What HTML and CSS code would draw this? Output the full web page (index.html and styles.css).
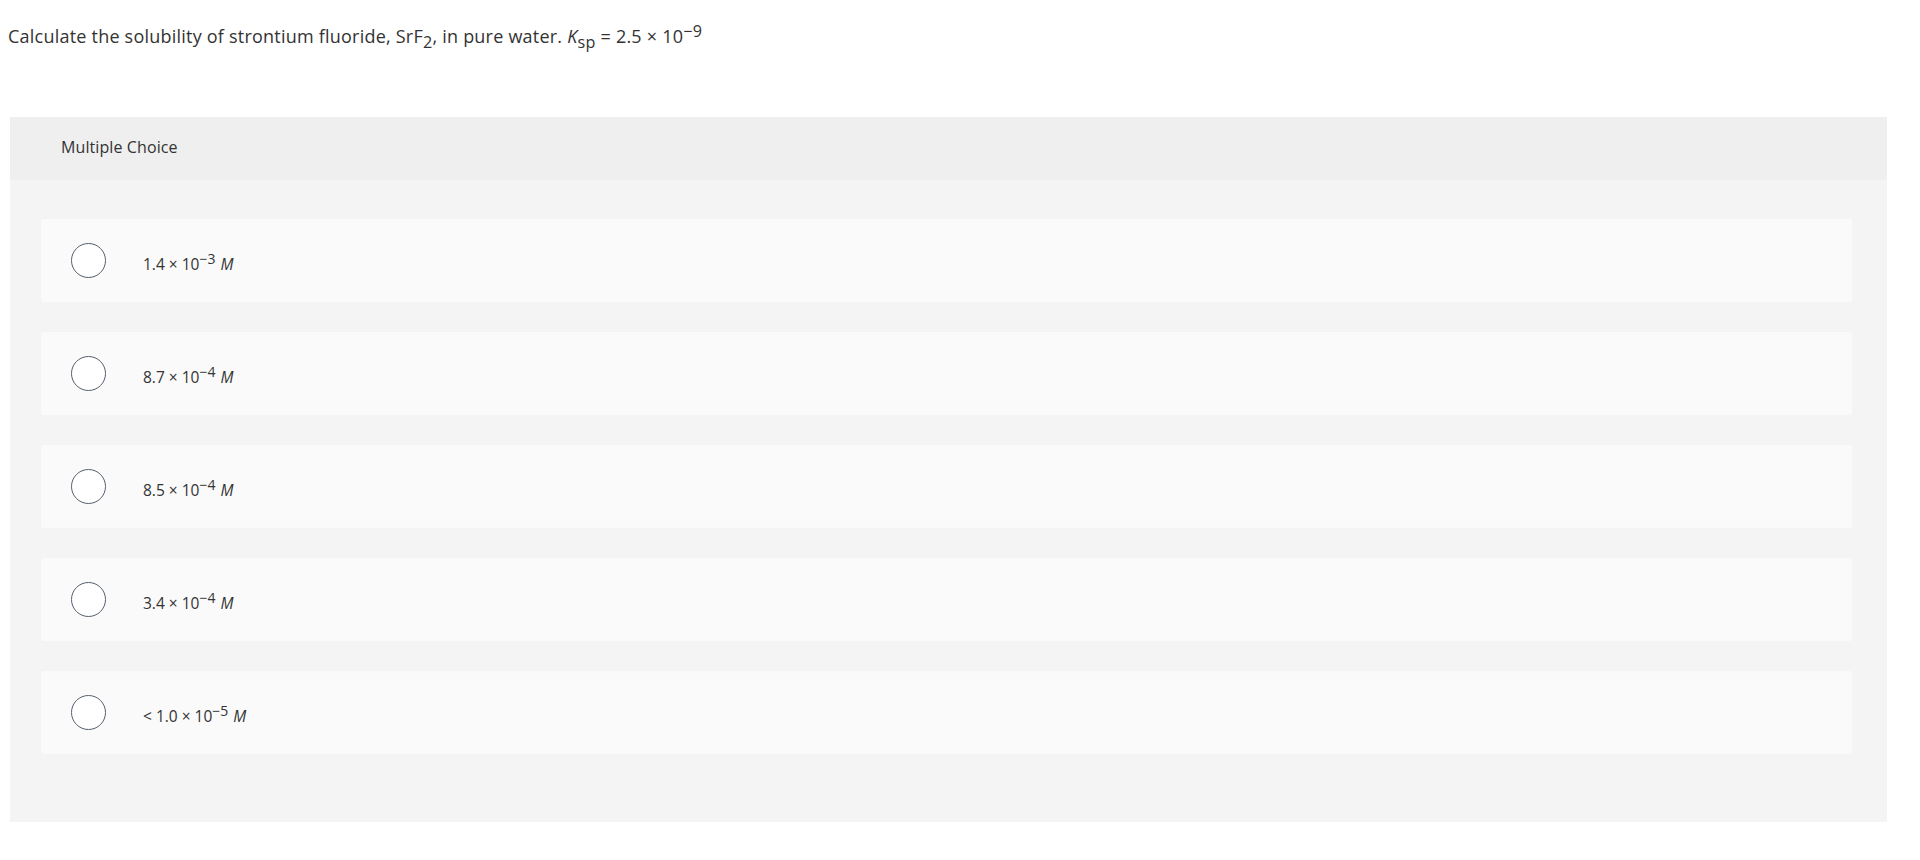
FILE: index.html
```html
<!DOCTYPE html>
<html lang="en">
<head>
<meta charset="utf-8">
<title>Multiple Choice</title>
<link rel="stylesheet" href="styles.css">
</head>
<body>
<div class="page">
  <p class="prompt">Calculate the solubility of strontium fluoride, SrF<sub class="sub">2</sub>, in pure water. <i>K</i><sub class="sub">sp</sub> = 2.5 × 10<sup class="sup">−9</sup></p>
  <section class="panel">
    <header class="panel-head">Multiple Choice</header>
    <div class="choices">
      <label class="choice"><span class="radio"></span><span class="answer">1.4 × 10<sup class="sup">−3</sup> <i>M</i></span></label>
      <label class="choice"><span class="radio"></span><span class="answer">8.7 × 10<sup class="sup">−4</sup> <i>M</i></span></label>
      <label class="choice"><span class="radio"></span><span class="answer">8.5 × 10<sup class="sup">−4</sup> <i>M</i></span></label>
      <label class="choice"><span class="radio"></span><span class="answer">3.4 × 10<sup class="sup">−4</sup> <i>M</i></span></label>
      <label class="choice"><span class="radio"></span><span class="answer">&lt; 1.0 × 10<sup class="sup">−5</sup> <i>M</i></span></label>
    </div>
  </section>
</div>
</body>
</html>
```

FILE: styles.css
```css
* { box-sizing: border-box; }
html, body { margin: 0; background: #ffffff; }
body {
  font-family: "Open Sans", "Liberation Sans", sans-serif;
  color: #333333;
}
.page {
  padding: 0 33px 0 8px;
}
.prompt {
  margin: 0;
  padding-top: 24px;
  height: 117px;
  font-size: 18px;
  line-height: 24px;
  letter-spacing: 0.22px;
}
.sub { font-size: 0.9em; vertical-align: -0.3em; line-height: 0; }
.sup { font-size: 0.9em; vertical-align: 0.4em; line-height: 0; }
.panel {
  margin-left: 2px;
  background: #f4f4f4;
  padding-bottom: 68px;
}
.panel-head {
  height: 63px;
  background: #efefef;
  display: flex;
  align-items: center;
  padding-left: 51px;
  padding-bottom: 3px;
  font-size: 16px;
  letter-spacing: 0.1px;
}
.choices {
  padding: 39px 35px 0 31px;
  display: flex;
  flex-direction: column;
  gap: 30px;
}
.choice {
  height: 83px;
  background: #fafafa;
  border-radius: 3px;
  display: flex;
  align-items: center;
  padding-left: 30px;
  font-size: 15.5px;
}
.radio {
  width: 35px;
  height: 35px;
  border: 1.5px solid #55606c;
  border-radius: 50%;
  background: #ffffff;
  flex: none;
}
.answer {
  margin-left: 37px;
  padding-top: 6px;
}
.answer i { margin-left: 1px; }
```
